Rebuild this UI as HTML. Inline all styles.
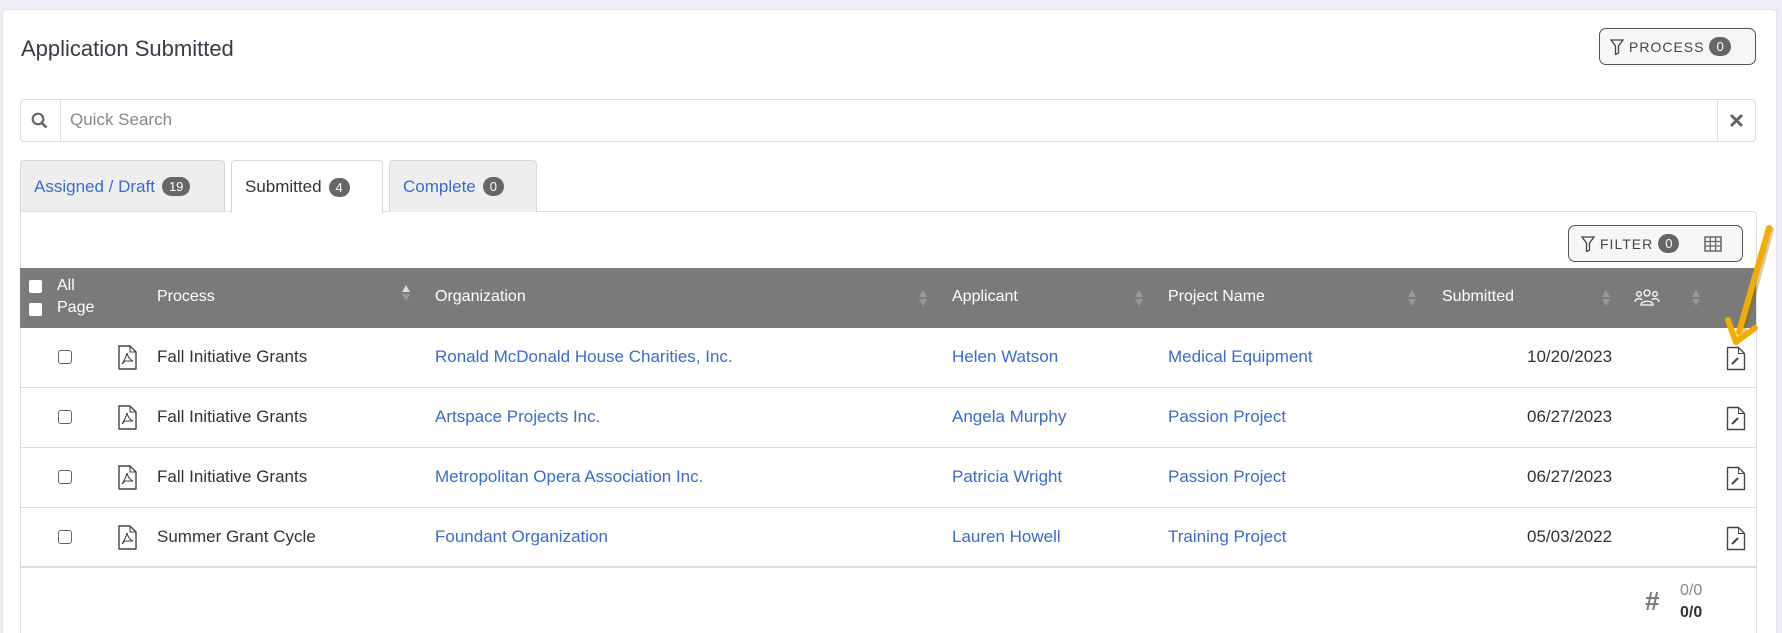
<!DOCTYPE html>
<html><head><meta charset="utf-8"><style>
*{box-sizing:border-box;margin:0;padding:0}
html,body{width:1782px;height:633px;overflow:hidden}
body{background:#eeeff6;font-family:"Liberation Sans",sans-serif;color:#333}
#wrap{position:relative;width:1782px;height:633px;overflow:hidden}
.abs{position:absolute}
.card{left:2px;top:9px;width:1775px;height:624px;background:#fff;border-radius:4px 4px 0 0;border:1px solid #e3e3ea;border-bottom:none}
.title{left:21px;top:36px;font-size:22px;color:#3a3a48}
.btn{border:1px solid #555;border-radius:7px;background:#f6f6f6;font-size:14px;letter-spacing:1px;color:#444;display:flex;align-items:center}
.badge{background:#666;color:#fff;border-radius:10px;font-size:13px;padding:2px 7px;display:inline-block;line-height:15px;letter-spacing:0}
.search{left:20px;top:99px;width:1736px;height:43px;border:1px solid #ddd;border-radius:4px}
.tab{top:160px;height:52px;border:1px solid #d8d8d8;border-bottom:none;border-radius:4px 4px 0 0;background:#eee;font-size:17px;color:#3a6bd1;display:flex;align-items:center;padding-left:13px;gap:7px}
.panel{left:20px;top:211px;width:1737px;height:422px;border:1px solid #ddd;border-bottom:none;border-radius:0 4px 0 0}
.hdr{left:20px;top:268px;width:1736px;height:60px;background:#7a7a7a;color:#fff;font-size:16px}
.hdr span{position:absolute;top:20px}
.sort{position:absolute;top:21px;width:8px;height:18px}
.row{left:20px;width:1736px;height:60px;border-bottom:1px solid #ddd;font-size:17px}
.row span{position:absolute;top:19px}
.lnk{color:#3a6bd1}
.cb{position:absolute;left:38px;top:22px;width:14px;height:14px;border:1.5px solid #666;border-radius:3px}
</style></head><body><div id="wrap">
<div class="abs card"></div>
<div class="abs title">Application Submitted</div>
<div class="abs btn" style="left:1599px;top:28px;width:157px;height:37px;padding-left:10px;gap:5px">
<svg width="14" height="16" viewBox="0 0 14 16"><path d="M1 1h12L8.5 7v7l-3 1.5V7z" fill="none" stroke="#444" stroke-width="1.3"/></svg>PROCESS <span class="badge">0</span></div>
<div class="abs search">
<svg class="abs" style="left:10px;top:12px" width="17" height="17" viewBox="0 0 17 17"><circle cx="7" cy="7" r="5.3" fill="none" stroke="#666" stroke-width="2.2"/><path d="M11 11l4.5 4.5" stroke="#666" stroke-width="2.6"/></svg>
<div class="abs" style="left:39px;top:0;height:41px;border-left:1px solid #ddd"></div>
<div class="abs" style="left:49px;top:10px;font-size:17px;color:#888">Quick Search</div>
<div class="abs" style="left:1696px;top:0;height:41px;border-left:1px solid #ddd"></div>
<svg class="abs" style="left:1708px;top:13px" width="15" height="15" viewBox="0 0 15 15"><path d="M2 2l11 11M13 2L2 13" stroke="#666" stroke-width="3"/></svg>
</div>
<div class="abs tab" style="left:20px;width:205px">Assigned / Draft <span class="badge">19</span></div>
<div class="abs panel"></div>
<div class="abs tab" style="left:231px;width:152px;background:#fff;color:#333;height:53px;z-index:2">Submitted <span class="badge">4</span></div>
<div class="abs tab" style="left:389px;width:148px">Complete <span class="badge">0</span></div>
<div class="abs btn" style="left:1568px;top:225px;width:175px;height:37px;padding-left:12px;gap:5px">
<svg width="14" height="16" viewBox="0 0 14 16"><path d="M1 1h12L8.5 7v7l-3 1.5V7z" fill="none" stroke="#444" stroke-width="1.3"/></svg>FILTER <span class="badge">0</span>
<svg style="margin-left:20px" width="18" height="16" viewBox="0 0 18 16"><rect x="1" y="1" width="16" height="14" fill="none" stroke="#666" stroke-width="1.5"/><path d="M1 5.5h16M1 10h16M6.3 1v14M11.6 1v14" stroke="#666" stroke-width="1.3"/></svg></div>
<div class="abs hdr">
<div class="abs" style="left:9px;top:12px;width:13px;height:13px;background:#fff;border-radius:2px"></div>
<div class="abs" style="left:9px;top:35px;width:13px;height:13px;background:#fff;border-radius:2px"></div>
<span style="left:37px;top:9px">All</span><span style="left:37px;top:31px">Page</span>
<span style="left:137px">Process</span>
<span style="left:415px">Organization</span>
<span style="left:932px">Applicant</span>
<span style="left:1148px">Project Name</span>
<span style="left:1422px">Submitted</span>
<svg class="abs" style="left:1614px;top:20px" width="26" height="20" viewBox="0 0 26 20"><g fill="none" stroke="#fff" stroke-width="1.3"><circle cx="13" cy="5" r="3"/><circle cx="5" cy="6" r="2.3"/><circle cx="21" cy="6" r="2.3"/><path d="M7 17c0-5 12-5 12 0zM1 14c0-4 6-4 7-2M25 14c0-4-6-4-7-2"/></g></svg>
<svg class="sort" style="left:382px;top:16px" viewBox="0 0 8 18"><path d="M0 8L4 1l4 7z" fill="#ddd"/><path d="M0 10l4 7 4-7z" fill="#999"/></svg>
<svg class="sort" style="left:899px" viewBox="0 0 8 18"><path d="M0 8L4 1l4 7zM0 10l4 7 4-7z" fill="#999"/></svg>
<svg class="sort" style="left:1115px" viewBox="0 0 8 18"><path d="M0 8L4 1l4 7zM0 10l4 7 4-7z" fill="#999"/></svg>
<svg class="sort" style="left:1388px" viewBox="0 0 8 18"><path d="M0 8L4 1l4 7zM0 10l4 7 4-7z" fill="#999"/></svg>
<svg class="sort" style="left:1582px" viewBox="0 0 8 18"><path d="M0 8L4 1l4 7zM0 10l4 7 4-7z" fill="#999"/></svg>
<svg class="sort" style="left:1672px" viewBox="0 0 8 18"><path d="M0 8L4 1l4 7zM0 10l4 7 4-7z" fill="#999"/></svg>
</div>

<div class="abs row" style="top:328px"><div class="cb"></div>
<svg class="abs" style="left:97px;top:17px" width="20" height="26" viewBox="0 0 20 26"><path d="M2 1h11l6 6v17H2z" fill="none" stroke="#444" stroke-width="1.4" stroke-linejoin="round"/><path d="M13 1v6h6M10 8c-1 4-3 8-5 11M10 8c1 4 3 7 6 8M5 19l3-3 8 0" fill="none" stroke="#444" stroke-width="1.1"/></svg>
<span style="left:137px">Fall Initiative Grants</span><span class="lnk" style="left:415px">Ronald McDonald House Charities, Inc.</span><span class="lnk" style="left:932px">Helen Watson</span><span class="lnk" style="left:1148px">Medical Equipment</span><span style="left:1507px">10/20/2023</span>
<svg class="abs" style="left:1706px;top:18px" width="20" height="25" viewBox="0 0 20 25"><path d="M1.5 1.5h11l6 6v16h-17z" fill="none" stroke="#444" stroke-width="1.4" stroke-linejoin="round"/><path d="M12.5 1.5v6h6" fill="none" stroke="#444" stroke-width="1"/><path d="M6 18l6-6" stroke="#444" stroke-width="2"/></svg></div>
<div class="abs row" style="top:388px"><div class="cb"></div>
<svg class="abs" style="left:97px;top:17px" width="20" height="26" viewBox="0 0 20 26"><path d="M2 1h11l6 6v17H2z" fill="none" stroke="#444" stroke-width="1.4" stroke-linejoin="round"/><path d="M13 1v6h6M10 8c-1 4-3 8-5 11M10 8c1 4 3 7 6 8M5 19l3-3 8 0" fill="none" stroke="#444" stroke-width="1.1"/></svg>
<span style="left:137px">Fall Initiative Grants</span><span class="lnk" style="left:415px">Artspace Projects Inc.</span><span class="lnk" style="left:932px">Angela Murphy</span><span class="lnk" style="left:1148px">Passion Project</span><span style="left:1507px">06/27/2023</span>
<svg class="abs" style="left:1706px;top:18px" width="20" height="25" viewBox="0 0 20 25"><path d="M1.5 1.5h11l6 6v16h-17z" fill="none" stroke="#444" stroke-width="1.4" stroke-linejoin="round"/><path d="M12.5 1.5v6h6" fill="none" stroke="#444" stroke-width="1"/><path d="M6 18l6-6" stroke="#444" stroke-width="2"/></svg></div>
<div class="abs row" style="top:448px"><div class="cb"></div>
<svg class="abs" style="left:97px;top:17px" width="20" height="26" viewBox="0 0 20 26"><path d="M2 1h11l6 6v17H2z" fill="none" stroke="#444" stroke-width="1.4" stroke-linejoin="round"/><path d="M13 1v6h6M10 8c-1 4-3 8-5 11M10 8c1 4 3 7 6 8M5 19l3-3 8 0" fill="none" stroke="#444" stroke-width="1.1"/></svg>
<span style="left:137px">Fall Initiative Grants</span><span class="lnk" style="left:415px">Metropolitan Opera Association Inc.</span><span class="lnk" style="left:932px">Patricia Wright</span><span class="lnk" style="left:1148px">Passion Project</span><span style="left:1507px">06/27/2023</span>
<svg class="abs" style="left:1706px;top:18px" width="20" height="25" viewBox="0 0 20 25"><path d="M1.5 1.5h11l6 6v16h-17z" fill="none" stroke="#444" stroke-width="1.4" stroke-linejoin="round"/><path d="M12.5 1.5v6h6" fill="none" stroke="#444" stroke-width="1"/><path d="M6 18l6-6" stroke="#444" stroke-width="2"/></svg></div>
<div class="abs row" style="top:508px;border-bottom:2px solid #ddd"><div class="cb"></div>
<svg class="abs" style="left:97px;top:17px" width="20" height="26" viewBox="0 0 20 26"><path d="M2 1h11l6 6v17H2z" fill="none" stroke="#444" stroke-width="1.4" stroke-linejoin="round"/><path d="M13 1v6h6M10 8c-1 4-3 8-5 11M10 8c1 4 3 7 6 8M5 19l3-3 8 0" fill="none" stroke="#444" stroke-width="1.1"/></svg>
<span style="left:137px">Summer Grant Cycle</span><span class="lnk" style="left:415px">Foundant Organization</span><span class="lnk" style="left:932px">Lauren Howell</span><span class="lnk" style="left:1148px">Training Project</span><span style="left:1507px">05/03/2022</span>
<svg class="abs" style="left:1706px;top:18px" width="20" height="25" viewBox="0 0 20 25"><path d="M1.5 1.5h11l6 6v16h-17z" fill="none" stroke="#444" stroke-width="1.4" stroke-linejoin="round"/><path d="M12.5 1.5v6h6" fill="none" stroke="#444" stroke-width="1"/><path d="M6 18l6-6" stroke="#444" stroke-width="2"/></svg></div>

<div class="abs" style="left:1645px;top:586px;font-size:26px;font-weight:bold;color:#777">#</div>
<div class="abs" style="left:1680px;top:582px;font-size:16px;color:#888">0/0</div>
<div class="abs" style="left:1680px;top:604px;font-size:16px;font-weight:bold;color:#333">0/0</div>

<svg class="abs" style="left:1720px;top:220px" width="60" height="160" viewBox="0 0 60 160"><path d="M49 8L20 114" stroke="#8a6a00" stroke-opacity=".35" stroke-width="7" stroke-linecap="round" transform="translate(1.5,1.5)"/><path d="M49 8L19 112" stroke="#f2ad00" stroke-width="6" stroke-linecap="round"/><path d="M8 100l8 22 19-14" fill="none" stroke="#f2ad00" stroke-width="6" stroke-linecap="round" stroke-linejoin="round"/></svg>
</div></body></html>
